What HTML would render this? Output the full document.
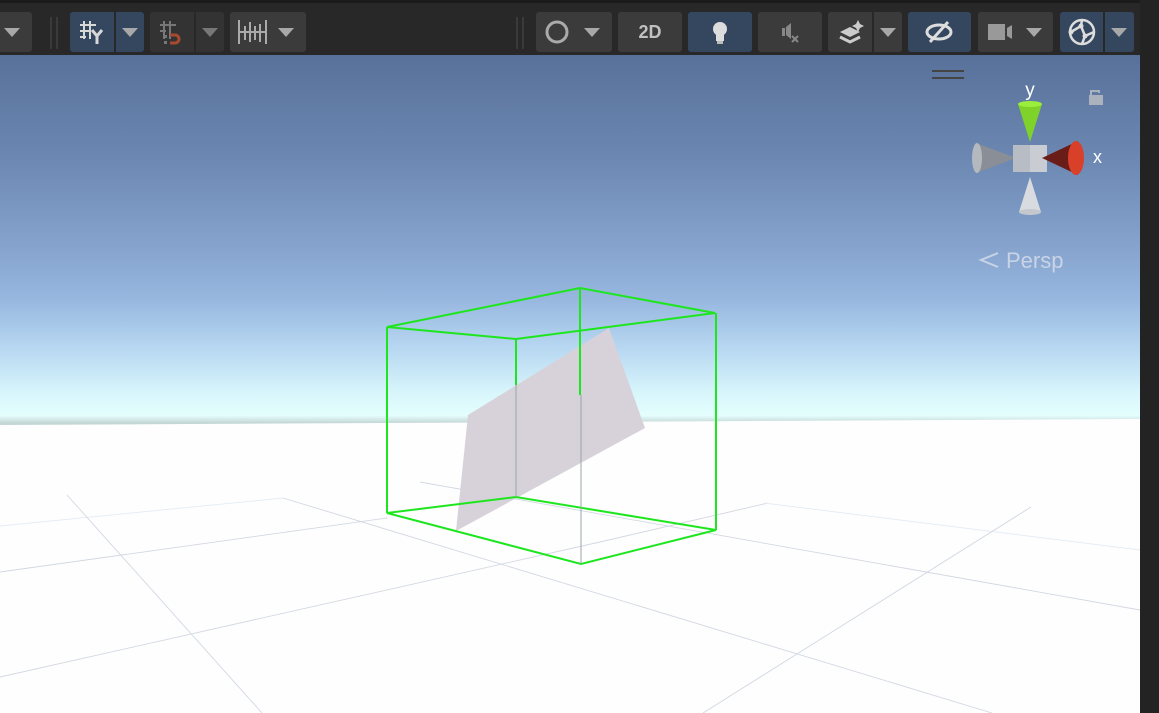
<!DOCTYPE html>
<html><head><meta charset="utf-8"><style>
*{margin:0;padding:0;box-sizing:border-box}
body{width:1159px;height:713px;overflow:hidden;background:#232323;font-family:"Liberation Sans",sans-serif;position:relative}
.tb{position:absolute;left:0;top:0;width:1159px;height:55px;background:#282828;border-top:3px solid #1b1b1b}
.b{position:absolute;top:9px;height:40px;background:#3b3b3b;border-radius:3px}
.bl{background:#34475f}
.dk{background:#333}
.ar{position:absolute;top:16px;width:0;height:0;border-left:8px solid transparent;border-right:8px solid transparent;border-top:9px solid #a8a8a8}
.sep{position:absolute;top:14px;width:2px;height:32px;background:#3a3a3a}
.vp{position:absolute;left:0;top:55px;width:1140px;height:658px}
.rs{position:absolute;left:1140px;top:0;width:19px;height:713px;background:#232323}
</style></head><body>
<div class="tb">
 <div class="b" style="left:-4px;width:36px"><div class="ar" style="left:8px"></div></div>
 <div class="sep" style="left:50px"></div><div class="sep" style="left:56px"></div>
 <div class="b bl" style="left:70px;width:44px;border-radius:3px 0 0 3px">
  <svg width="44" height="40" style="position:absolute;left:0;top:-3px"><g stroke="#d8d8d8" stroke-width="2" fill="none"><path d="M14 12v18M20 12v18M10 16h16M10 22h10M10 28h6"/><path d="M22 21l5 6l5-6M27 27v8" stroke-width="3"/></g></svg>
 </div>
 <div class="b bl" style="left:116px;width:28px;border-radius:0 3px 3px 0"><div class="ar" style="left:6px"></div></div>
 <div class="b dk" style="left:150px;width:44px;border-radius:3px 0 0 3px">
  <svg width="44" height="40" style="position:absolute;left:0;top:-3px"><g stroke="#777" stroke-width="2" fill="none"><path d="M14 12v18M20 12v18M10 16h16M10 22h6"/></g><rect x="14" y="26" width="3" height="3" fill="#777"/><rect x="14" y="32" width="3" height="3" fill="#777"/><path d="M20 26h5a4 4 0 0 1 0 8h-5" stroke="#a84a30" stroke-width="3" fill="none"/></svg>
 </div>
 <div class="b dk" style="left:196px;width:28px;border-radius:0 3px 3px 0"><div class="ar" style="left:6px;border-top-color:#777"></div></div>
 <div class="b" style="left:230px;width:76px">
  <svg width="40" height="40" style="position:absolute;left:6px;top:0"><g stroke="#aaa" stroke-width="2"><path d="M3 8v24M30 8v24M9 14v14M14 10v20M19 14v14M24 12v18M3 20h27"/></g></svg>
  <div class="ar" style="left:48px"></div>
 </div>
 <div class="sep" style="left:516px"></div><div class="sep" style="left:522px"></div>
 <div class="b" style="left:536px;width:76px">
  <svg width="30" height="40" style="position:absolute;left:6px;top:0"><circle cx="15" cy="20" r="10" stroke="#aaa" stroke-width="3" fill="none"/></svg>
  <div class="ar" style="left:48px"></div>
 </div>
 <div class="b" style="left:618px;width:64px;color:#c0c0c0;font-weight:bold;font-size:18px;text-align:center;line-height:40px">2D</div>
 <div class="b bl" style="left:688px;width:64px"><svg width="64" height="40"><circle cx="32" cy="17" r="7" fill="#ddd"/><rect x="28" y="22" width="8" height="7" fill="#ddd"/><rect x="29" y="29" width="6" height="3" fill="#bbb"/></svg></div>
 <div class="b" style="left:758px;width:64px"><svg width="64" height="40"><rect x="24" y="16" width="3" height="8" fill="#888"/><path d="M28 15l5-4v16l-5-4z" fill="#888"/><path d="M34 24l6 6M40 24l-6 6" stroke="#888" stroke-width="2"/></svg></div>
 <div class="b" style="left:828px;width:44px;border-radius:3px 0 0 3px"><svg width="44" height="40"><path d="M12 20l10-5l10 5l-10 5z" fill="#ccc"/><path d="M12 25l10 5l10-5" stroke="#ccc" stroke-width="3" fill="none"/><path d="M30 8l2 4l4 2l-4 2l-2 4l-2-4l-4-2l4-2z" fill="#ccc"/></svg></div>
 <div class="b" style="left:874px;width:28px;border-radius:0 3px 3px 0"><div class="ar" style="left:6px"></div></div>
 <div class="b bl" style="left:908px;width:63px"><svg width="63" height="40"><ellipse cx="31" cy="20" rx="12" ry="7" stroke="#ddd" stroke-width="3" fill="none"/><path d="M22 30l18-20" stroke="#ddd" stroke-width="3"/></svg></div>
 <div class="b" style="left:978px;width:75px"><svg width="40" height="40"><rect x="10" y="12" width="17" height="16" fill="#999"/><path d="M29 16l5-3v14l-5-3z" fill="#999"/></svg><div class="ar" style="left:48px"></div></div>
 <div class="b bl" style="left:1060px;width:43px;border-radius:3px 0 0 3px"><svg width="43" height="40"><g stroke="#ddd" stroke-width="2.5" fill="none"><circle cx="22" cy="20" r="12"/><path d="M22 8l-1 6l-10 6M21 14l4 10l9-4M25 24l-3 8"/></g><circle cx="21" cy="14" r="2.5" fill="#ddd"/><circle cx="11" cy="20" r="2.5" fill="#ddd"/><circle cx="25" cy="24" r="2.5" fill="#ddd"/></svg></div>
 <div class="b bl" style="left:1105px;width:29px;border-radius:0 3px 3px 0"><div class="ar" style="left:6px"></div></div>
</div>
<div class="rs"></div>
<svg class="vp" width="1140" height="658" viewBox="0 55 1140 658">
 <defs><linearGradient id="sky" x1="0" y1="55" x2="0" y2="423" gradientUnits="userSpaceOnUse">
  <stop offset="0" stop-color="#58719a"/><stop offset="0.26" stop-color="#6a86b0"/><stop offset="0.53" stop-color="#86a4ce"/><stop offset="0.67" stop-color="#98b8e0"/><stop offset="0.8" stop-color="#b8d8f2"/><stop offset="0.92" stop-color="#d8f6fb"/><stop offset="0.98" stop-color="#e4fefd"/><stop offset="1" stop-color="#c4d6d6"/></linearGradient></defs>
 <rect x="0" y="55" width="1140" height="370" fill="url(#sky)"/>
 <polygon points="0,425 1140,419 1140,713 0,713" fill="#fefefe"/>
 <g stroke="#d2d8e2" stroke-width="0.9" fill="none">
  <path d="M0,526 L283,498" stroke="#e4ecf4"/><path d="M0,572 L387,518"/><path d="M0,677 L600,542 L768,503"/>
  <path d="M67,495 L262,713"/><path d="M283,498 L992,713"/><path d="M420,482 L1140,610"/><path d="M764,503 L1140,550" stroke="#e4ecf4"/>
  <path d="M703,713 L1031,507"/>
 </g>
 <polygon points="468,415 609,328 645,428 456,531" fill="#d7d2da"/>
 <g stroke="#1ee61e" stroke-width="2" fill="none">
  <path d="M387,327 L580,288 L715,313 L516,339 Z"/>
  <path d="M387,513 L516,497 L716,530 L581,564 Z"/>
  <path d="M387,327 V513 M716,313 V530 M580,288 V395 M516,339 V385"/>
 </g>
 <path d="M581,395 V564 M516,385 V497" stroke="#9aa5a8" stroke-width="1"/>
 <path d="M932,71h32M932,78h32" stroke="#444" stroke-width="2"/>
 <rect x="1089" y="95" width="14" height="10" fill="#aab2bd"/><path d="M1091,95v-4h8v2" stroke="#aab2bd" stroke-width="2" fill="none"/>
 <text x="1030" y="96" font-size="19" fill="#fff" text-anchor="middle" font-family="Liberation Sans">y</text>
 <polygon points="1018,104 1042,104 1030,142" fill="#7ed22a"/><ellipse cx="1030" cy="104" rx="12" ry="3" fill="#9bef3c"/>
 <polygon points="976,143 1016,158 976,173" fill="#8a8e96"/><ellipse cx="977" cy="158" rx="5" ry="15" fill="#b4b8bf"/>
 <rect x="1013" y="145" width="34" height="27" fill="#b8bcc4"/><rect x="1030" y="145" width="17" height="27" fill="#c9ccd2"/>
 <polygon points="1078,141 1042,158 1078,175" fill="#6a1c18"/><ellipse cx="1076" cy="158" rx="8" ry="17" fill="#d8402a"/>
 <text x="1093" y="163" font-size="18" fill="#fff" font-family="Liberation Sans">x</text>
 <polygon points="1030,177 1019,212 1041,212" fill="#d8dbe0"/><ellipse cx="1030" cy="212" rx="11" ry="3" fill="#c4c8ce"/>
 <path d="M998,253 L981,260 L998,267" stroke="#c8d4e6" stroke-width="2" fill="none"/>
 <text x="1006" y="268" font-size="22" fill="#c8d4e6" font-family="Liberation Sans">Persp</text>
</svg>
</body></html>
